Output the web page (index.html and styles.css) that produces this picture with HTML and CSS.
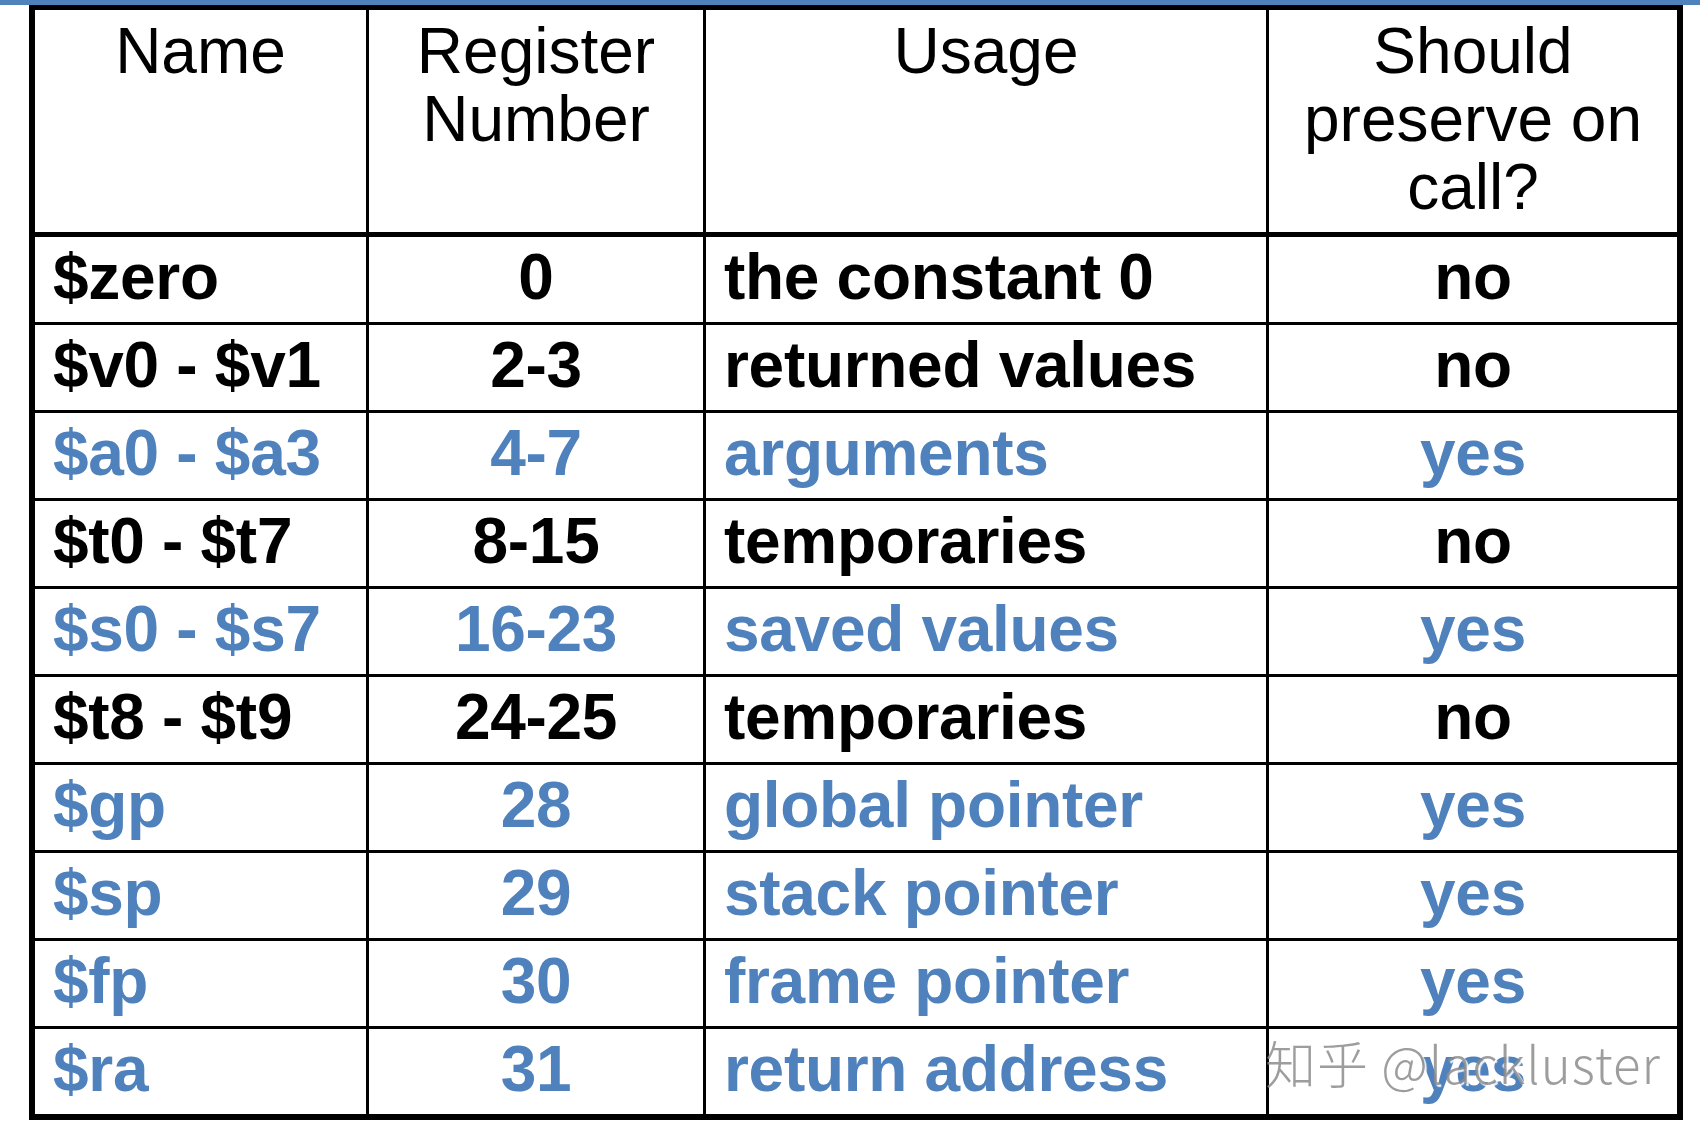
FILE: index.html
```html
<!DOCTYPE html>
<html lang="en">
<head>
<meta charset="utf-8">
<title>MIPS Register Conventions</title>
<link rel="stylesheet" href="styles.css">
</head>
<body>
<div class="page">
  <div class="topbar"></div>
  <div class="reg-table">
    <div class="cell head">Name</div>
    <div class="cell head">Register Number</div>
    <div class="cell head">Usage</div>
    <div class="cell head">Should preserve on call?</div>

    <div class="cell">$zero</div><div class="cell c">0</div><div class="cell">the constant 0</div><div class="cell c">no</div>
    <div class="cell">$v0 - $v1</div><div class="cell c">2-3</div><div class="cell">returned values</div><div class="cell c">no</div>
    <div class="cell b">$a0 - $a3</div><div class="cell c b">4-7</div><div class="cell b">arguments</div><div class="cell c b">yes</div>
    <div class="cell">$t0 - $t7</div><div class="cell c">8-15</div><div class="cell">temporaries</div><div class="cell c">no</div>
    <div class="cell b">$s0 - $s7</div><div class="cell c b">16-23</div><div class="cell b">saved values</div><div class="cell c b">yes</div>
    <div class="cell">$t8 - $t9</div><div class="cell c">24-25</div><div class="cell">temporaries</div><div class="cell c">no</div>
    <div class="cell b">$gp</div><div class="cell c b">28</div><div class="cell b">global pointer</div><div class="cell c b">yes</div>
    <div class="cell b">$sp</div><div class="cell c b">29</div><div class="cell b">stack pointer</div><div class="cell c b">yes</div>
    <div class="cell b">$fp</div><div class="cell c b">30</div><div class="cell b">frame pointer</div><div class="cell c b">yes</div>
    <div class="cell b">$ra</div><div class="cell c b">31</div><div class="cell b">return address</div><div class="cell c b">yes</div>
  </div>
  <div class="watermark">知乎 @lackluster</div>
</div>
</body>
</html>
```

FILE: styles.css
```css
html, body {
  margin: 0;
  padding: 0;
  background: #ffffff;
}

.page {
  position: relative;
  width: 1700px;
  height: 1132px;
  overflow: hidden;
  font-family: "Liberation Sans", Arial, sans-serif;
}

.topbar {
  height: 5px;
  background: #4f81bd;
}

.reg-table {
  margin-left: 29px;
  width: 1654px;
  box-sizing: border-box;
  display: grid;
  grid-template-columns: 331px 334px 560px 408px;
  grid-template-rows: 224px repeat(10, 85px);
  gap: 3px;
  background: #000000;
  border: 6px solid #000000;
  border-top-width: 5px;
}

.cell {
  background: #ffffff;
  color: #000000;
  font-size: 64px;
  font-weight: bold;
  line-height: 64px;
  padding: 8px 17px 0 18px;
  white-space: nowrap;
  box-sizing: border-box;
  letter-spacing: -0.3px;
}

.cell.c {
  text-align: center;
  padding-left: 0;
  padding-right: 0;
}

.cell.b {
  color: #4f81bd;
}

.cell.head {
  font-weight: normal;
  text-align: center;
  line-height: 68px;
  padding: 7px 0 0;
  white-space: normal;
  letter-spacing: 0;
  border-bottom: 2px solid #000000;
}

.watermark {
  position: absolute;
  left: 1265px;
  top: 1032px;
  font-family: "Noto Sans CJK SC", "Noto Sans", sans-serif;
  font-size: 51px;
  line-height: 60px;
  font-weight: 300;
  color: rgba(140, 140, 140, 0.85);
  text-shadow: 2px 2px 1px rgba(255, 255, 255, 0.9);
  white-space: nowrap;
  letter-spacing: 1px;
}
```
